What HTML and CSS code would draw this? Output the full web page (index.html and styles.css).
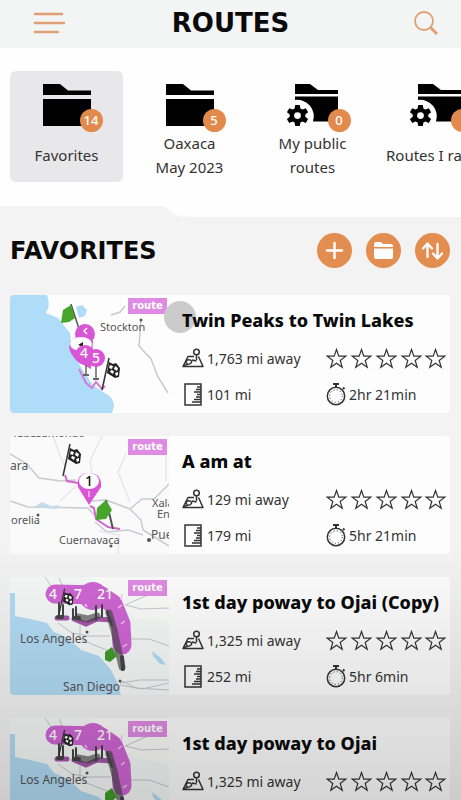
FILE: index.html
```html
<!DOCTYPE html>
<html lang="en">
<head>
<meta charset="utf-8">
<meta name="viewport" content="width=device-width, initial-scale=1">
<title>Routes</title>
<link rel="stylesheet" href="styles.css">
</head>
<body>
<svg class="defs" aria-hidden="true">
  <symbol id="folder" viewBox="0 0 48 42">
    <path d="M0 0h17l8 6.500h23V11H0zM0 15h48v27H0z"/>
  </symbol>
  <symbol id="folder-gear" viewBox="0 0 52 42">
    <path d="M8 0h15l8 6h20v4H8zM8 12.500h43V37.500H26A16.500 16.500 0 0 0 8 16z"/>
    <path fill-rule="evenodd" d="M8.200 21h4.600l.6 3.600 2 1 3.400-1.400 2.300 4-2.800 2.300v2.200l2.800 2.300-2.300 4-3.400-1.400-2 1-.6 3.400H8.200l-.6-3.400-2-1L2.200 39-.1 35l2.800-2.300v-2.200L-.1 28.200l2.300-4 3.400 1.400 2-1zM10.500 28.200a3.400 3.400 0 1 0 0 6.800 3.400 3.400 0 0 0 0-6.800z"/>
  </symbol>
  <symbol id="distance" viewBox="0 0 22 20">
    <g fill="none" stroke="#333" stroke-width="1.500" stroke-linejoin="round">
      <circle cx="14.500" cy="4" r="2.800"/>
      <path d="M14.500 7v5M12 8.500H6L1 18.500h20l-4.500-10"/>
      <path d="M1.500 17.500c2-1 7-1 8-3s-2-3.500-4-2.500-2 3 0 3.500M10 12l4.500 1"/>
    </g>
  </symbol>
  <symbol id="ruler" viewBox="0 0 18 23">
    <path d="M1 1h16v21H1z" fill="none" stroke="#333" stroke-width="1.500"/>
    <path d="M17 4h-4M17 6.500h-5M17 9h-7M17 11.500h-4M17 14h-5M17 16.500h-7M17 19H8" stroke="#333" stroke-width="1.300"/>
  </symbol>
  <symbol id="watch" viewBox="0 0 20 23">
    <g fill="none" stroke="#333">
      <circle cx="10" cy="13" r="8.700" stroke-width="1.500"/>
      <circle cx="10" cy="13" r="6.300" stroke-dasharray="1 2.300"/>
      <path d="M7 1h6M10 1v3M17 4.500l1.500 1.500" stroke-width="2"/>
    </g>
  </symbol>
  <symbol id="stars" viewBox="0 0 121 21">
    <g fill="none" stroke="#333" stroke-width="1.200">
      <path id="star" d="M10.500 1.500l2.300 6.600 7 .1-5.600 4.300 2 6.800-5.700-4-5.700 4 2-6.800L1.200 8.200l7-.1z"/>
      <use href="#star" x="25"/><use href="#star" x="50"/><use href="#star" x="75"/><use href="#star" x="99"/>
    </g>
  </symbol>
  <symbol id="checkered" viewBox="0 0 22 34">
    <path d="M8 1L1 33" stroke="#333" stroke-width="1.500"/>
    <path d="M8 5l4 2 3-1 4 5-1 9-4 1-8-5z" fill="#222"/>
    <path d="M9 8l3 1-1 3-3-1zM14 9l3 2-1 3-3-2zM10 13l3 1-1 3-3-2zM14 16l3-1 0 3-2 1z" fill="#fff"/>
  </symbol>
  <symbol id="map-socal" viewBox="0 0 159 118">
    <rect width="159" height="118" fill="#f5f9f7"/>
    <path d="M80 0h79v45l-35-5z" fill="#fcfdfb"/>
    <path d="M0 16h5v23l15 3 17 4 7 9 14 6 13 12 18 6 12 14 6 12 4 13H0z" fill="#b2dcf5"/>
    <path d="M142 74l9 7 5 7-6-1-7-8zM69 80l4 1-1 2z" fill="#b2dcf5"/>
    <g fill="none" stroke="#c3c7ce">
      <path d="M35 0l12 18M49 1l5 11M48 46l14 10 16 3h22M70 48v14l14 6 18 7M115 28l30-13M116 28l15 4 28-1M121 62l18 0 20 7M110 106l20-3 29 0M110 108l22 4 27-6M112 104l14 7 33 2"/>
    </g>
    <path d="M45 17L90 18 103 27 111 47 112 68" fill="none" stroke="#cf66d4" stroke-width="19" stroke-linecap="round" stroke-linejoin="round"/>
    <circle cx="83" cy="19" r="14" fill="#cf66d4"/>
    <g fill="none" stroke="#444" stroke-linecap="round">
      <path d="M47 41h10M64 42l12 5 11-5 14 1" stroke="#a557aa" stroke-width="5"/>
      <path d="M49 26v14M53 28v12M66 30v11M63 32v10M86 29v14M92 28v12M97 34l5 15" stroke-width="2"/>
      <path d="M68 40l10 2 9-3M99 36l5 17 5 24 3 13" stroke-width="7" opacity=".65"/>
      <path d="M48 40h4M65 41h4M112 80l1 12" stroke-width="4"/>
    </g>
    <path d="M95 75l7-5 5 9-7 6-5-2z" fill="#419b2a"/>
    <use href="#checkered" x="48" y="9" width="18" height="32"/>
    <g class="pin-text" fill="#fff"><text x="39" y="22">4</text><text x="64" y="22">7</text><text x="87" y="22">21</text></g>
    <path d="M108 31l4-3M111 47l4-3M113 70l4-3M112 17l-1 6M75 27l2 3" stroke="#f5c5f7" stroke-width="1.500"/>
    <g class="place"><text x="10" y="66">Los Angeles</text><text x="53" y="114">San Diego</text></g>
    <g fill="#555"><circle cx="77" cy="55" r="1.500"/><circle cx="110" cy="104" r="1.500"/></g>
  </symbol>
</svg>

<div class="screen">
  <header class="topbar">
    <button class="plain menu" aria-label="Menu"><svg width="32" height="24" viewBox="0 0 32 24"><path d="M2 3h27M2 12h29M2 21h23" stroke="#dfa173" stroke-width="2.500" stroke-linecap="round"/></svg></button>
    <h1>ROUTES</h1>
    <button class="plain search" aria-label="Search"><svg width="26" height="26" viewBox="0 0 26 26" fill="none" stroke="#dfa173"><circle cx="11" cy="11" r="9" stroke-width="1.800"/><path d="M17 17l7 7" stroke-width="3"/></svg></button>
  </header>

  <nav class="folders" aria-label="Route folders">
    <a class="folder active" href="#"><span class="pic"><svg width="48" height="42"><use href="#folder"/></svg><b class="badge">14</b></span><span class="name">Favorites</span></a>
    <a class="folder" href="#"><span class="pic"><svg width="48" height="42"><use href="#folder"/></svg><b class="badge">5</b></span><span class="name">Oaxaca<br>May 2023</span></a>
    <a class="folder" href="#"><span class="pic"><svg width="52" height="42"><use href="#folder-gear"/></svg><b class="badge">0</b></span><span class="name">My public<br>routes</span></a>
    <a class="folder" href="#"><span class="pic"><svg width="52" height="42"><use href="#folder-gear"/></svg><b class="badge"></b></span><span class="name">Routes I rated</span></a>
  </nav>

  <main class="panel">
    <div class="tab-edge"><svg width="196" height="11" viewBox="0 0 196 11" aria-hidden="true"><path d="M0 0h160c10 0 9 10 24 10.500L196 11H0z" fill="#f3f3f4"/></svg></div>
    <div class="section-head">
      <h2>FAVORITES</h2>
      <div class="actions">
        <button class="round" aria-label="Add"><svg width="35" height="35" viewBox="0 0 35 35"><path d="M17.500 10v15M10 17.500h15" stroke="#fff" stroke-width="2.500" stroke-linecap="round"/></svg></button>
        <button class="round" aria-label="Folders"><svg width="35" height="35" viewBox="0 0 35 35" fill="#fff"><path d="M8 11q0-2 2-2h5l2 2h8q2 0 2 2v1H8zM8 15.500h19V24q0 2-2 2H10q-2 0-2-2z"/></svg></button>
        <button class="round" aria-label="Sort"><svg width="35" height="35" viewBox="0 0 35 35" fill="none" stroke="#fff" stroke-width="2.300" stroke-linecap="round" stroke-linejoin="round"><path d="M12.500 24V11M8 15.500l4.500-5 4.500 5M22.500 11v14M18 20.500l4.500 5 4.500-5"/></svg></button>
      </div>
    </div>

    <div class="cards">
      <article class="card">
        <div class="map">
          <svg viewBox="0 0 159 118" aria-hidden="true">
            <rect width="159" height="118" fill="#fdfdfd"/>
            <path d="M0 0h37q4 10-1 18l12 5 12 15 2 18 10 18 11 16 10 7q11 5 11 14l-2 7H0z" fill="#afdcf8"/>
            <path d="M66 12l6-2 5 5-2 6-6 2z" fill="#afdcf8"/>
            <path d="M131 25l-2 26 12 13 7 18 10 16M101 20l9-3 5-6" fill="none" stroke="#cacaca" stroke-width="1.500"/>
            <path d="M69 74l7 14 6 5 4-6 6 7 3-3" fill="none" stroke="#d27fd3" stroke-width="2"/>
            <path d="M61 9l9 28" stroke="#555" stroke-width="1.500"/><path d="M61 10l-8 5-2 13 8-1 6-4z" fill="#46a52a"/>
            <circle cx="75" cy="39" r="10" fill="#d856d5"/><path d="M59 52q2-10 13-12l11 6-2 28-14-8q-7-7-8-14z" fill="#d856d5"/>
            <ellipse cx="71" cy="49" rx="11" ry="7" fill="#fff"/><path d="M68 50l5-3v5z" fill="#222"/>
            <path d="M76 70v10M86 71v13" stroke="#666" stroke-width="1.500"/><path d="M73 80h6M83 84h6" stroke="#666" stroke-width="2"/>
            <circle cx="75" cy="60" r="10" fill="#d856d5"/><circle cx="86" cy="63" r="9" fill="#d856d5"/>
            <path d="M77 33l-3 3 3 3" fill="none" stroke="#fff" stroke-width="1.500"/>
            <use href="#checkered" x="91" y="62" width="22" height="34"/>
            <g class="pin-text" fill="#fff"><text x="70" y="63">4</text><text x="82" y="68">5</text></g>
            <text class="place small" x="90" y="36">Stockton</text><circle cx="131" cy="25" r="1.500" fill="#555"/>
          </svg>
          <span class="tag">route</span>
        </div>
        <div class="info"><span class="touch"></span>
          <h3>Twin Peaks to Twin Lakes</h3>
          <div class="meta">
            <span><svg width="22" height="20"><use href="#distance"/></svg>1,763 mi away</span>
            <svg class="rate" width="121" height="21" role="img" aria-label="Not rated"><use href="#stars"/></svg>
            <span><svg width="22" height="23"><use href="#ruler"/></svg>101 mi</span>
            <span><svg width="20" height="23"><use href="#watch"/></svg>2hr 21min</span>
          </div>
        </div>
      </article>

      <article class="card">
        <div class="map">
          <svg viewBox="0 0 159 118" aria-hidden="true">
            <rect width="159" height="118" fill="#fafafb"/>
            <g fill="none" stroke="#c9cbd2" stroke-width="1.500">
              <path d="M0 18l17 10 12 14 22 3 15-1M0 65l18 6 60 1 11 12M120 73l-24-9-16 1M120 73l11 11 2 10 26 16M120 73l12-10h12l15-15M85 86l12 10 21-2 15 5"/>
              <path d="M43 0l7 20 6 11M92 0l-12 25 2 12M116 18l-8 18 12 30M66 50L50 65M89 95l20 4-1 19M156 20v25" stroke="#e5e6ea"/>
            </g>
            <path d="M24 71l8-5 9 4 9-1-4 4z" fill="#c4dcea"/>
            <path d="M55 39l2 6 11 2M80 70l4 2 2 11 12 8 12 2" fill="none" stroke="#d166cc" stroke-width="2"/>
            <use href="#checkered" x="52" y="7" width="22" height="34"/>
            <path d="M96 64l7 29" stroke="#555" stroke-width="2"/><path d="M96 64l-9 8-1 12 10-1 6-9z" fill="#46a52a"/>
            <path d="M79 69L68 51q-2-14 11-14t12 14z" fill="#d856d5"/><ellipse cx="79" cy="45" rx="10" ry="8" fill="#fff"/>
            <text class="pin-text" x="75" y="50" fill="#111">1</text><path d="M79 55v6" stroke="#fff"/>
            <g class="place"><text x="0" y="34">ara</text><text x="141" y="103">Pue</text></g>
            <g class="place small"><text x="1" y="88">orelia</text><text x="49" y="108">Cuernavaca</text><text x="142" y="71">Xala</text><text x="147" y="82">En</text><text x="2" y="1">Tabasamondo</text></g>
            <g fill="#555"><circle cx="28" cy="79" r="1.500"/><circle cx="101" cy="110" r="1.500"/><circle cx="139" cy="104" r="2"/></g>
          </svg>
          <span class="tag">route</span>
        </div>
        <div class="info">
          <h3>A am at</h3>
          <div class="meta">
            <span><svg width="22" height="20"><use href="#distance"/></svg>129 mi away</span>
            <svg class="rate" width="121" height="21" role="img" aria-label="Not rated"><use href="#stars"/></svg>
            <span><svg width="22" height="23"><use href="#ruler"/></svg>179 mi</span>
            <span><svg width="20" height="23"><use href="#watch"/></svg>5hr 21min</span>
          </div>
        </div>
      </article>

      <article class="card">
        <div class="map"><svg viewBox="0 0 159 118" aria-hidden="true"><use href="#map-socal"/></svg><span class="tag">route</span></div>
        <div class="info">
          <h3>1st day poway to Ojai (Copy)</h3>
          <div class="meta">
            <span><svg width="22" height="20"><use href="#distance"/></svg>1,325 mi away</span>
            <svg class="rate" width="121" height="21" role="img" aria-label="Not rated"><use href="#stars"/></svg>
            <span><svg width="22" height="23"><use href="#ruler"/></svg>252 mi</span>
            <span><svg width="20" height="23"><use href="#watch"/></svg>5hr 6min</span>
          </div>
        </div>
      </article>

      <article class="card">
        <div class="map"><svg viewBox="0 0 159 118" aria-hidden="true"><use href="#map-socal"/></svg><span class="tag">route</span></div>
        <div class="info">
          <h3>1st day poway to Ojai</h3>
          <div class="meta">
            <span><svg width="22" height="20"><use href="#distance"/></svg>1,325 mi away</span>
            <svg class="rate" width="121" height="21" role="img" aria-label="Not rated"><use href="#stars"/></svg>
          </div>
        </div>
      </article>
    </div>
  </main>
  <div class="shade"></div>
</div>
</body>
</html>
```
FILE: styles.css
```css
* { box-sizing: border-box; }

body {
  margin: 0;
  font-family: "Noto Sans", sans-serif;
  color: #333;
  background: #f3f3f4;
}

h1, h2, h3 { margin: 0; color: #0a0a0a; }
button { padding: 0; border: 0; background: none; }
svg { display: block; flex: none; }
.defs { position: absolute; width: 0; height: 0; }

.screen {
  position: relative;
  height: 100vh;
  overflow: hidden;
}

.topbar {
  display: grid;
  grid-template-columns: 1fr auto 1fr;
  align-items: center;
  height: 48px;
  padding: 0 22px 2px;
  background: #f3f4f4;
}
.menu { justify-self: start; padding-left: 11px; }
.search { justify-self: end; }
.topbar h1, .section-head h2 {
  font-family: "DejaVu Sans", sans-serif;
  font-weight: 700;
  line-height: 32px;
}
.topbar h1 { font-size: 26px; }
.section-head h2 { font-size: 24px; }

.folders {
  display: flex;
  gap: 10px;
  padding: 23px 10px 24px;
  overflow: hidden;
  background: #fefefe;
}
.folder {
  flex: 0 0 113px;
  height: 111px;
  display: flex;
  flex-direction: column;
  align-items: center;
  padding-top: 13px;
  border-radius: 6px;
  color: #333;
  text-decoration: none;
}
.folder.active { background: #e8e8eb; }
.pic { position: relative; }
.pic svg { fill: #000; }
.badge {
  position: absolute;
  right: -12px;
  bottom: -6px;
  width: 23px;
  height: 23px;
  border-radius: 50%;
  background: #e18a4c;
  color: #fff;
  font-size: 13px;
  font-weight: 500;
  line-height: 23px;
  text-align: center;
}
.name {
  display: flex;
  align-items: center;
  height: 48px;
  margin-top: 5px;
  font-size: 15px;
  line-height: 24px;
  text-align: center;
  white-space: nowrap;
}

.tab-edge { background: #fefefe; }
.section-head {
  display: flex;
  align-items: center;
  justify-content: space-between;
  height: 67px;
  padding: 0 11px 0 10px;
}
.actions { display: flex; gap: 14px; }
.round {
  width: 35px;
  height: 35px;
  border-radius: 50%;
  background: #e38d50;
}

.cards {
  display: flex;
  flex-direction: column;
  gap: 23px;
  padding: 11px 11px 11px 10px;
}
.card {
  display: grid;
  grid-template-columns: 159px 1fr;
  height: 118px;
  border-radius: 4px;
  background: #fdfdfd;
}
.map { position: relative; overflow: hidden; border-radius: 4px 0 0 4px; }
.map svg { width: 100%; }
.place { font-size: 12px; fill: #555; }
.place.small { font-size: 11px; }
.pin-text { font-size: 14px; font-weight: 500; }
.tag {
  position: absolute;
  top: 3px;
  right: 2px;
  width: 39px;
  height: 16px;
  background: #e08be3;
  color: #fff;
  font: 700 10px/16px "DejaVu Sans", sans-serif;
  text-align: center;
}
.info { position: relative; padding: 11px 3px 0 13px; }
.info h3 {
  position: relative;
  font-size: 18px;
  font-weight: 800;
  line-height: 28px;
  white-space: nowrap;
}
.touch {
  position: absolute;
  left: -5px;
  top: 6px;
  width: 32px;
  height: 32px;
  border-radius: 50%;
  background: #cbcbcb;
}
.meta {
  display: grid;
  grid-template-columns: 1fr 121px;
  grid-auto-rows: 36px;
  align-items: center;
  padding-top: 6px;
}
.meta span {
  display: flex;
  align-items: center;
  gap: 3px;
  font-size: 14px;
  white-space: nowrap;
}

.shade {
  position: absolute;
  inset: 68% 0 0;
  background: linear-gradient(rgba(0, 0, 0, 0), rgba(0, 0, 0, 0.16));
  pointer-events: none;
}
```
